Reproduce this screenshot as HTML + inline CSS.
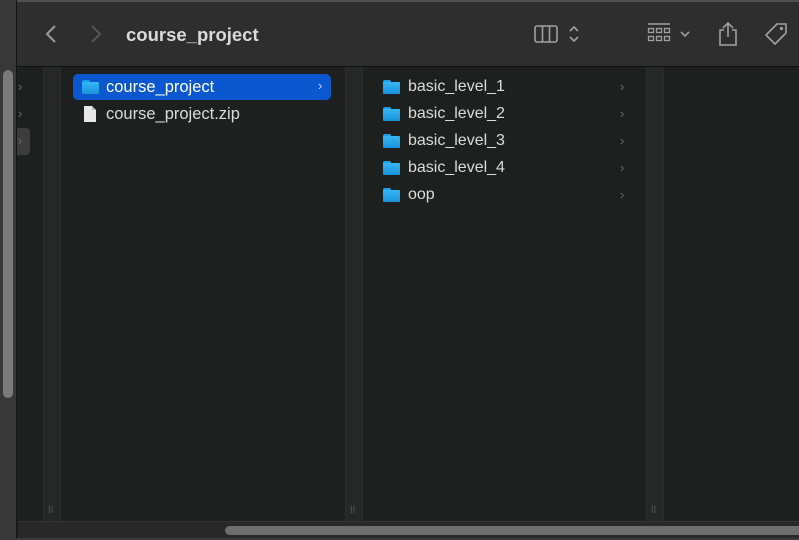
<!DOCTYPE html>
<html><head><style>
*{margin:0;padding:0;box-sizing:border-box}
body{width:799px;height:540px;overflow:hidden;background:#1e1f1f;font-family:"Liberation Sans",sans-serif;position:relative}
.a{position:absolute}
.t{color:#dcdcdc;font-size:16px;white-space:nowrap}
.chev{color:#6a6a6a;font-size:13px}
.fold{position:absolute;width:17px;height:14px}
.fold:before{content:"";position:absolute;left:0;top:0;width:8px;height:4px;background:#1aa0e8;border-radius:2px 2px 0 0}
.fold:after{content:"";position:absolute;left:0;top:2px;width:17px;height:12px;background:linear-gradient(#35b6f5,#1992dc);border-radius:1px}
</style></head><body>
<div class="a" style="left:0;top:0;width:799px;height:67px;background:#2e2e2e;border-top:2px solid #505050;border-bottom:1px solid #111"></div>
<div class="a" style="left:0;top:0;width:17px;height:540px;background:#383838;border-right:1px solid #151515"></div>
<div class="a" style="left:3px;top:70px;width:10px;height:328px;background:#7a7a7a;border-radius:5px"></div>
<svg class="a" style="left:44px;top:24px" width="16" height="20"><path d="M11 2 L3 10 L11 18" stroke="#9a9a9a" stroke-width="2" fill="none"/></svg>
<svg class="a" style="left:88px;top:24px" width="16" height="20"><path d="M4 2 L12 10 L4 18" stroke="#555" stroke-width="2" fill="none"/></svg>
<div class="a" style="left:126px;top:24px;font-size:18.5px;font-weight:bold;color:#dadada">course_project</div>
<svg class="a" style="left:534px;top:24px" width="50" height="22"><rect x="1" y="2" width="22" height="16" rx="2" stroke="#a0a0a0" stroke-width="1.6" fill="none"/><path d="M8.5 2v16M15.5 2v16" stroke="#a0a0a0" stroke-width="1.6"/><path d="M36 7l4-4 4 4M36 13l4 4 4-4" stroke="#a0a0a0" stroke-width="1.6" fill="none"/></svg>
<svg class="a" style="left:647px;top:22px" width="46" height="24"><path d="M1 2h22" stroke="#a0a0a0" stroke-width="1.5"/><g fill="none" stroke="#a0a0a0" stroke-width="1.3"><rect x="1.5" y="6.5" width="5" height="4"/><rect x="9.5" y="6.5" width="5" height="4"/><rect x="17.5" y="6.5" width="5" height="4"/><rect x="1.5" y="14.5" width="5" height="4"/><rect x="9.5" y="14.5" width="5" height="4"/><rect x="17.5" y="14.5" width="5" height="4"/></g><path d="M34 10l4 4 4-4" stroke="#a0a0a0" stroke-width="1.6" fill="none"/></svg>
<svg class="a" style="left:716px;top:20px" width="24" height="28"><path d="M8 10H4v15h16V10h-4M12 17V3M7 8l5-5 5 5" stroke="#a0a0a0" stroke-width="1.6" fill="none"/></svg>
<svg class="a" style="left:762px;top:20px" width="30" height="28"><path d="M4 15L15 4h9v9L13 24z" stroke="#a0a0a0" stroke-width="1.6" fill="none" stroke-linejoin="round"/><circle cx="19.5" cy="8.5" r="1.6" fill="#a0a0a0"/></svg>
<div class="a" style="left:43px;top:67px;width:18px;height:454px;background:#262727;border-left:1px solid #2c2c2c;border-right:1px solid #2c2c2c"></div>
<div class="a" style="left:345px;top:67px;width:18px;height:454px;background:#262727;border-left:1px solid #2c2c2c;border-right:1px solid #2c2c2c"></div>
<div class="a" style="left:646px;top:67px;width:18px;height:454px;background:#262727;border-left:1px solid #2c2c2c;border-right:1px solid #2c2c2c"></div>
<div class="a" style="left:48px;top:505px;color:#555;font-size:10px">ǀǀ</div>
<div class="a" style="left:350px;top:505px;color:#555;font-size:10px">ǀǀ</div>
<div class="a" style="left:651px;top:505px;color:#555;font-size:10px">ǀǀ</div>
<div class="a" style="left:18px;top:521px;width:781px;height:17px;background:#282828;border-top:1px solid #333"></div>
<div class="a" style="left:225px;top:526px;width:580px;height:9px;background:#6e6e6e;border-radius:5px"></div>
<div class="a" style="left:0;top:538px;width:799px;height:2px;background:#3a3a3a"></div>
<div class="a" style="left:17px;top:128px;width:13px;height:27px;background:#3c3c3c;border-radius:0 4px 4px 0"></div>
<div class="a chev" style="left:18px;top:79px">›</div>
<div class="a chev" style="left:18px;top:106px">›</div>
<div class="a chev" style="left:18px;top:133px">›</div>
<div class="a" style="left:73px;top:74px;width:258px;height:26px;background:#0b57cf;border-radius:5px"></div>
<div class="fold" style="left:82px;top:80px"></div>
<div class="a t" style="left:106px;top:78px;color:#fff;font-size:16.5px">course_project</div>
<div class="a" style="left:318px;top:78px;color:#cfd8f0;font-size:13px">›</div>
<svg class="a" style="left:83px;top:105px" width="14" height="18"><path d="M1 1h8l4 4v12H1z" fill="#e8e8e8"/><path d="M9 1v4h4" fill="#bbb"/></svg>
<div class="a t" style="left:106px;top:105px;font-size:16.5px">course_project.zip</div>
<div class="fold" style="left:383px;top:80px"></div><div class="a t" style="left:408px;top:78px">basic_level_1</div><div class="a chev" style="left:620px;top:79px">›</div>
<div class="fold" style="left:383px;top:107px"></div><div class="a t" style="left:408px;top:105px">basic_level_2</div><div class="a chev" style="left:620px;top:106px">›</div>
<div class="fold" style="left:383px;top:134px"></div><div class="a t" style="left:408px;top:132px">basic_level_3</div><div class="a chev" style="left:620px;top:133px">›</div>
<div class="fold" style="left:383px;top:161px"></div><div class="a t" style="left:408px;top:159px">basic_level_4</div><div class="a chev" style="left:620px;top:160px">›</div>
<div class="fold" style="left:383px;top:188px"></div><div class="a t" style="left:408px;top:186px">oop</div><div class="a chev" style="left:620px;top:187px">›</div>
</body></html>
